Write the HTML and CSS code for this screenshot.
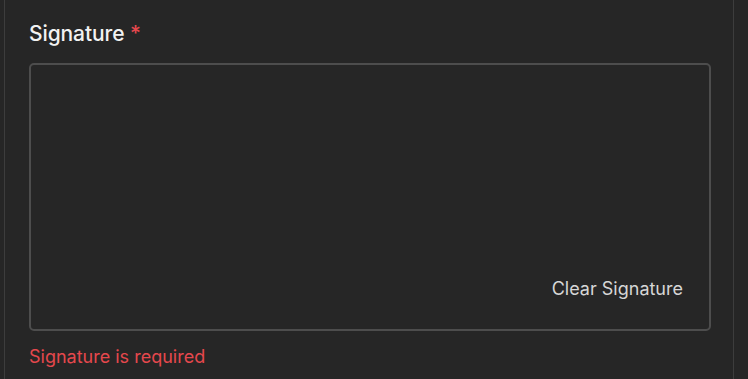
FILE: index.html
```html
<!DOCTYPE html>
<html>
<head>
<meta charset="utf-8">
<link rel="stylesheet" href="styles.css">
</head>
<body>
<div class="panel">
  <div class="field">
    <div class="label">Signature <span class="req">*</span></div>
    <div class="pad">
      <button class="clear">Clear Signature</button>
    </div>
    <div class="error">Signature is required</div>
  </div>
</div>
</body>
</html>
```
FILE: styles.css
```css
html, body {
  margin: 0;
  padding: 0;
  background: #262626;
  height: 100%;
}
body {
  font-family: Inter, "Noto Sans", sans-serif;
  overflow: hidden;
}
.panel {
  margin-left: 4px;
  width: 730px;
  height: 379px;
  border-left: 1px solid #3d3d3d;
  border-right: 1px solid #3d3d3d;
  box-sizing: border-box;
  padding: 20px 0 0 24px;
}
.field {
  width: 682px;
}
.label {
  color: #f2f2f2;
  font-size: 21px;
  font-weight: 500;
  line-height: 28px;
  letter-spacing: -0.1px;
}
.req {
  color: #e5484d;
}
.pad {
  margin-top: 15px;
  height: 268px;
  border: 2px solid #4d4d4d;
  border-radius: 5px;
  box-sizing: border-box;
  display: flex;
  align-items: flex-end;
  justify-content: flex-end;
  padding: 0 26px 29px 0;
}
.clear {
  background: none;
  border: none;
  padding: 0;
  color: #d6d6d6;
  font-family: Inter, "Noto Sans", sans-serif;
  font-size: 18px;
  line-height: 22px;
}
.error {
  margin-top: 14px;
  color: #e5484d;
  font-size: 18px;
  line-height: 24px;
}
```
